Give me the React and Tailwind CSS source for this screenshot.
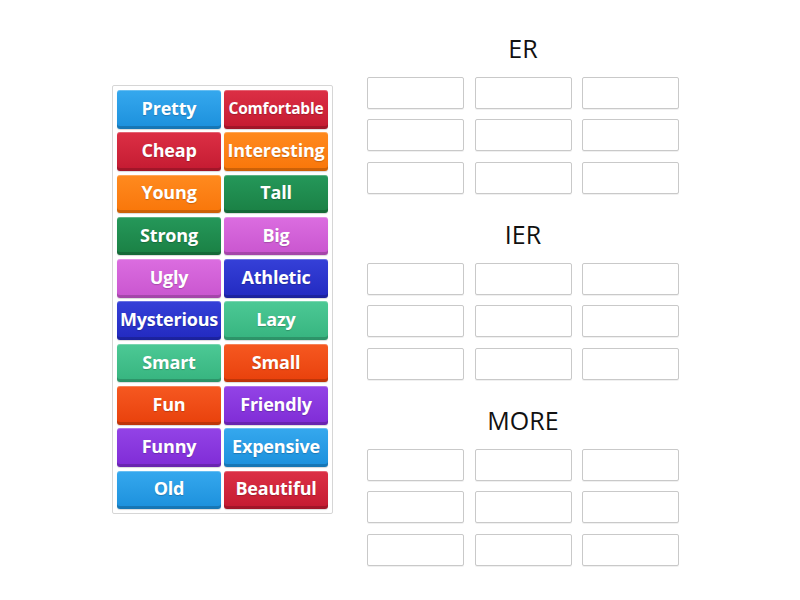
import React from "react";

// 颜色对应的样式
const tileStyle = {
  blue: "bg-gradient-to-b from-[#35a8ee] to-[#1b90dc]",
  red: "bg-gradient-to-b from-[#dc2f45] to-[#c41a31]",
  orange: "bg-gradient-to-b from-[#ff8a1e] to-[#f97608]",
  green: "bg-gradient-to-b from-[#25985a] to-[#1a8044]",
  pink: "bg-gradient-to-b from-[#db6de0] to-[#c955cf]",
  navy: "bg-gradient-to-b from-[#3540d8] to-[#2229c0]",
  mint: "bg-gradient-to-b from-[#4cc995] to-[#36b47f]",
  redorange: "bg-gradient-to-b from-[#f65820] to-[#e8400a]",
  purple: "bg-gradient-to-b from-[#9343e6] to-[#7f2bd6]",
};

const TILES = [
  ["Pretty", "blue", "text-[18px]"],
  ["Comfortable", "red", "text-[15.5px]"],
  ["Cheap", "red", "text-[18px]"],
  ["Interesting", "orange", "text-[18px]"],
  ["Young", "orange", "text-[18px]"],
  ["Tall", "green", "text-[18px]"],
  ["Strong", "green", "text-[18px]"],
  ["Big", "pink", "text-[18px]"],
  ["Ugly", "pink", "text-[18px]"],
  ["Athletic", "navy", "text-[18px]"],
  ["Mysterious", "navy", "text-[18px]"],
  ["Lazy", "mint", "text-[18px]"],
  ["Smart", "mint", "text-[18px]"],
  ["Small", "redorange", "text-[18px]"],
  ["Fun", "redorange", "text-[18px]"],
  ["Friendly", "purple", "text-[18px]"],
  ["Funny", "purple", "text-[18px]"],
  ["Expensive", "blue", "text-[18px]"],
  ["Old", "blue", "text-[18px]"],
  ["Beautiful", "red", "text-[18px]"],
];

const GROUPS = ["ER", "IER", "MORE"];

export default function App() {
  return (
    <div
      className="w-[800px] h-[600px] bg-white flex items-start"
      style={{ fontFamily: '"Open Sans", "Liberation Sans", sans-serif' }}
    >
      {/* 左侧词卡 */}
      <div className="ml-[112px] mt-[85px] border border-[#d6d6d6] rounded-[2px] p-[4px]">
        <div className="grid grid-cols-[104px_104px] gap-x-[3px] gap-y-[3.8px]">
          {TILES.map(([word, color, size]) => (
            <div
              key={word}
              className={`h-[38.5px] rounded-[3px] flex items-center justify-center pb-[2px] font-bold text-white whitespace-nowrap tracking-[-0.2px] shadow-[inset_0_-3px_0_rgba(0,0,0,0.18),inset_0_1px_0_rgba(255,255,255,0.25),0_1px_1px_rgba(0,0,0,0.15)] [text-shadow:0_1px_1px_rgba(0,0,0,0.2)] ${tileStyle[color]} ${size}`}
            >
              {word}
            </div>
          ))}
        </div>
      </div>

      {/* 右侧分组 */}
      <div className="ml-[34px] mt-[32px] flex flex-col gap-y-[24.4px]">
        {GROUPS.map((g) => (
          <div key={g}>
            <h2 className="text-[25px] leading-[32px] text-center text-[#111] mb-[13px]">
              {g}
            </h2>
            <div className="grid grid-cols-[97px_97px_97px] gap-x-[10.5px] gap-y-[10.3px]">
              {Array.from({ length: 9 }).map((_, i) => (
                <div
                  key={i}
                  className="h-[32px] border border-[#c9c9c9] rounded-[2px] bg-white shadow-[0_1px_0_rgba(0,0,0,0.06)]"
                />
              ))}
            </div>
          </div>
        ))}
      </div>
    </div>
  );
}
